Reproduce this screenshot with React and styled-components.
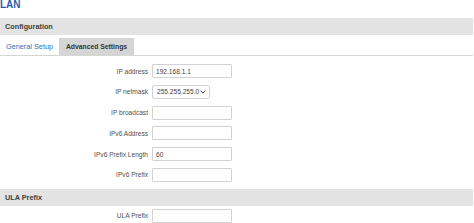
import React from 'react';
import styled, {createGlobalStyle} from 'styled-components';

const Global = createGlobalStyle`
    body {
        margin: 0;
        background: white;
        font-family: "Liberation Sans", Arial, sans-serif;
        overflow: hidden;
    }
`;

const Page = styled.div`
    width: 473px;
    display: flex;
    flex-direction: column;
`;

const Title = styled.h1`
    margin: 0;
    font-size: 10px;
    line-height: 9px;
    font-weight: bold;
    color: #1f5fa9;
    height: 18px;
`;

const SectionBar = styled.div`
    height: 17px;
    background: #e3e3e3;
    display: flex;
    align-items: center;
    padding-left: 5px;
    font-size: 7.3px;
    font-weight: bold;
    color: #404040;
    white-space: nowrap;
`;

const Tabs = styled.div`
    display: flex;
    align-items: stretch;
    height: 17px;
    margin-top: 3px;
    border-bottom: 1px solid #d6d6d6;
`;

const Tab = styled.div`
    display: flex;
    align-items: center;
    justify-content: center;
    white-space: nowrap;
    flex-shrink: 0;
    font-size: ${p => p.active ? '7.3px' : '6.8px'};
    font-weight: ${p => p.active ? 'normal' : 'bold'};
    color: ${p => p.active ? '#2f73c0' : '#333'};
    background: ${p => p.active ? 'white' : '#d5d5d5'};
    width: ${p => p.width}px;
`;

const Form = styled.div`
    display: flex;
    flex-direction: column;
    gap: 6.8px;
    padding: ${p => p.top}px 0 ${p => p.bottom}px 0;
`;

const Row = styled.div`
    display: flex;
    align-items: center;
    height: 14px;
`;

const Label = styled.label`
    width: 152px;
    text-align: right;
    font-size: 6.6px;
    color: #505050;
    padding-right: 4px;
    box-sizing: border-box;
    flex-shrink: 0;
    white-space: nowrap;
`;

const Input = styled.input`
    width: 80px;
    height: 14px;
    box-sizing: border-box;
    border: 1px solid #d2d2d2;
    border-radius: 1px;
    padding: 0 3px;
    font-family: "Liberation Sans", Arial, sans-serif;
    font-size: 6.6px;
    color: #444;
    outline: none;
    margin: 0;
`;

const SelectWrap = styled.div`
    position: relative;
    width: 58px;
    height: 14px;
`;

const Select = styled.select`
    appearance: none;
    display: block;
    width: 58px;
    height: 14px;
    line-height: 12px;
    box-sizing: border-box;
    border: 1px solid #d2d2d2;
    border-radius: 2px;
    background: white;
    padding: 0 0 0 4px;
    font-family: "Liberation Sans", Arial, sans-serif;
    font-size: 6.6px;
    color: #444;
    outline: none;
    margin: 0;
`;

const Chevron = styled.svg`
    position: absolute;
    right: 4px;
    top: 5px;
    pointer-events: none;
`;

const Field = ({label, value}) => (
    <Row>
        <Label>{label}</Label>
        <Input defaultValue={value || ''}/>
    </Row>
);

export default function App() {
    return (
        <Page>
            <Global/>
            <Title>LAN</Title>
            <SectionBar>Configuration</SectionBar>
            <Tabs>
                <Tab active width={59}>General Setup</Tab>
                <Tab width={75}>Advanced Settings</Tab>
            </Tabs>
            <Form top={8} bottom={7}>
                <Field label="IP address" value="192.168.1.1"/>
                <Row>
                    <Label>IP netmask</Label>
                    <SelectWrap>
                        <Select defaultValue="255.255.255.0">
                            <option>255.255.255.0</option>
                        </Select>
                        <Chevron width="6" height="4" viewBox="0 0 6 4">
                            <path d="M0.6 0.6 L3 3 L5.4 0.6" fill="none" stroke="#444" strokeWidth="1"/>
                        </Chevron>
                    </SelectWrap>
                </Row>
                <Field label="IP broadcast"/>
                <Field label="IPv6 Address"/>
                <Field label="IPv6 Prefix Length" value="60"/>
                <Field label="IPv6 Prefix"/>
            </Form>
            <SectionBar>ULA Prefix</SectionBar>
            <Form top={3} bottom={0}>
                <Field label="ULA Prefix"/>
            </Form>
        </Page>
    );
}
